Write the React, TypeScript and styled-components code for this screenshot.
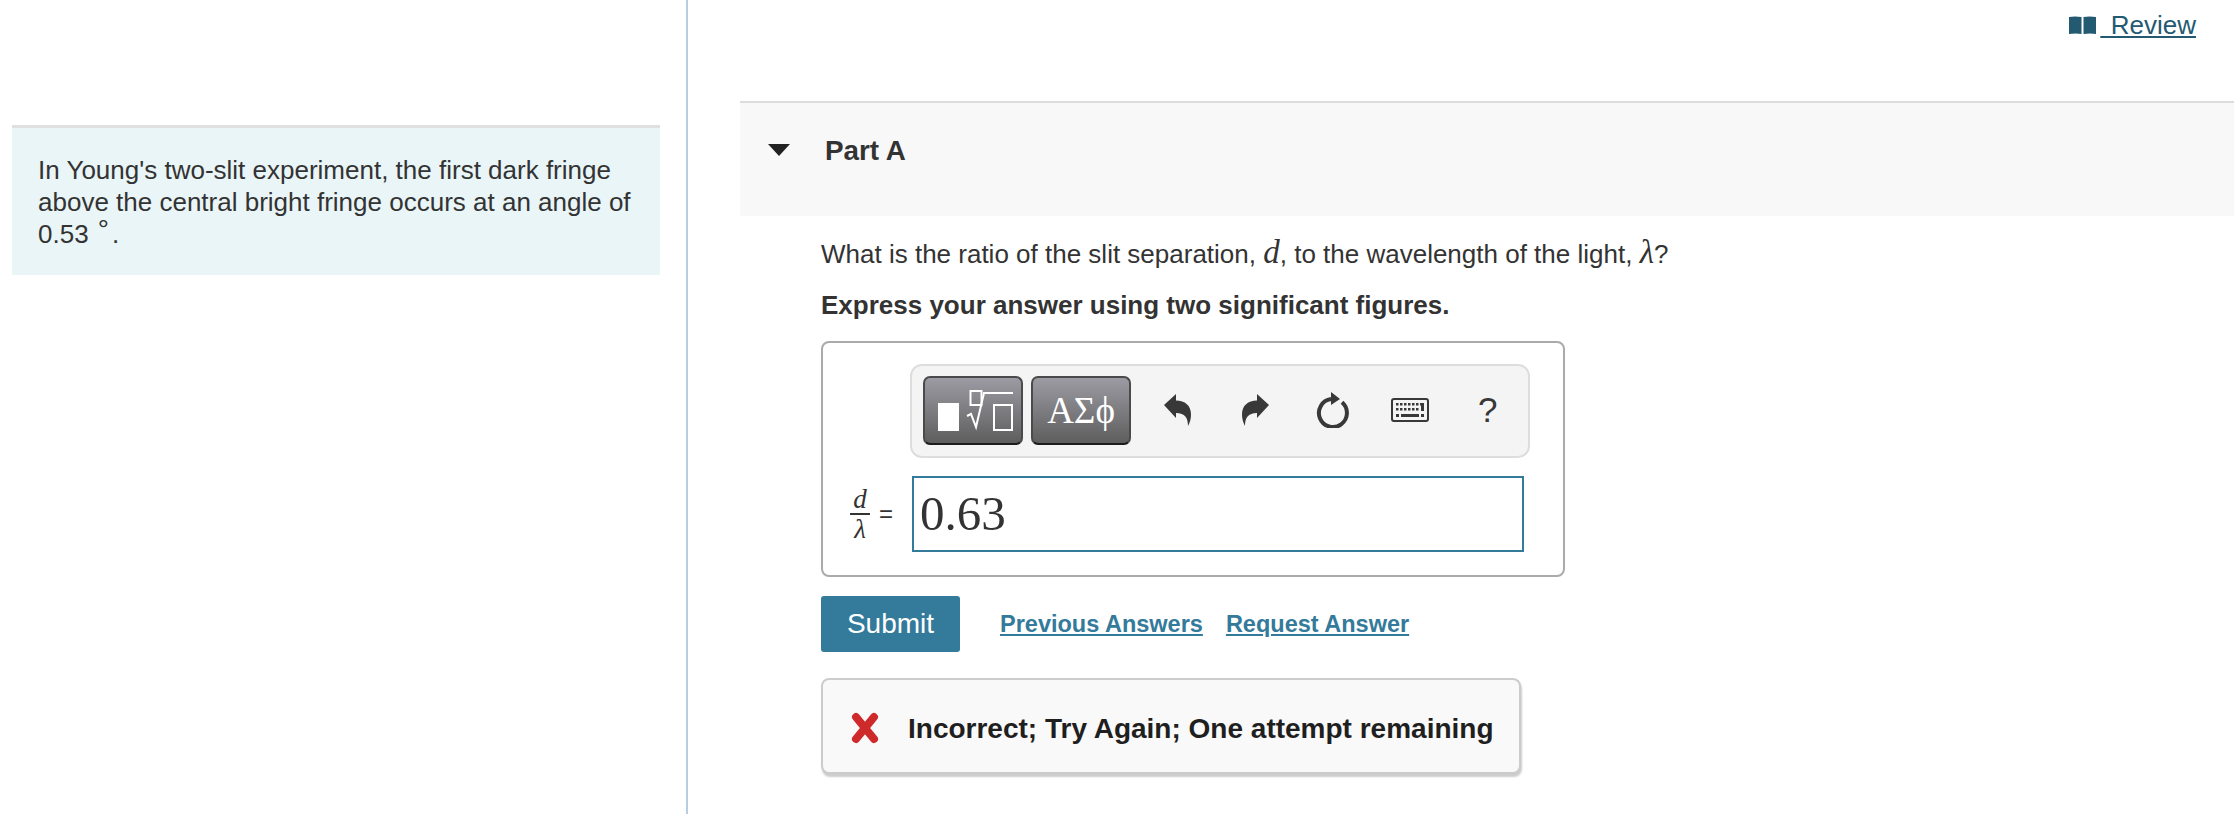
import * as React from "react";
import styled, { createGlobalStyle } from "styled-components";

const GlobalStyle = createGlobalStyle`
  html, body {
    margin: 0;
    background: #ffffff;
    overflow: hidden;
  }
  * {
    box-sizing: border-box;
  }
`;

const Page = styled.div`
  display: flex;
  width: 2240px;
  height: 814px;
  font-family: "Liberation Sans", Arial, sans-serif;
  color: #333333;
`;

const Sidebar = styled.aside`
  width: 688px;
  flex: none;
  padding: 125px 26px 0 12px;
  border-right: 2px solid #b9cde0;
`;

const Intro = styled.div`
  height: 150px;
  padding: 26px 26px 0;
  background: #e9f5f7;
  border-top: 3px solid #e0e0e0;
  font-size: 26px;
  line-height: 32px;
`;

const Degree = styled.span`
  margin: 0 3px 0 2px;
  font-size: 28px;
  line-height: 0;
  vertical-align: 4px;
`;

const Main = styled.main`
  flex: 1;
  padding: 0 6px 0 52px;
`;

const TopRow = styled.div`
  height: 101px;
  display: flex;
  justify-content: flex-end;
  align-items: flex-start;
  padding: 10px 38px 0 0;
`;

const ReviewLink = styled.a`
  display: flex;
  align-items: center;
  color: #235a72;
  font-size: 26px;
  line-height: 30px;
`;

const ReviewText = styled.span`
  margin-left: 4px;
  text-decoration: underline;
  white-space: pre;
  word-spacing: -2px;
`;

const PartHeader = styled.div`
  height: 115px;
  display: flex;
  align-items: flex-start;
  padding: 32px 0 0 28px;
  background: #f8f8f8;
  border-top: 2px solid #dddddd;
`;

const Caret = styled.span`
  width: 0;
  height: 0;
  margin: 9px 35px 0 0;
  border-left: 11px solid transparent;
  border-right: 11px solid transparent;
  border-top: 12px solid #222222;
`;

const PartTitle = styled.h2`
  margin: 0;
  font-size: 27.8px;
  line-height: 32px;
  font-weight: 700;
`;

const Body = styled.div`
  padding: 20px 0 0 81px;
`;

const Question = styled.p`
  margin: 0;
  font-size: 26px;
  line-height: 36px;
`;

const Instruction = styled.p`
  margin: 15px 0 0;
  font-size: 26px;
  line-height: 36px;
  font-weight: 700;
`;

const MathVar = styled.i`
  font-family: "Liberation Serif", serif;
  font-size: 33px;
  line-height: 0;
`;

const AnswerBox = styled.div`
  width: 744px;
  height: 236px;
  margin-top: 18px;
  padding: 21px 39px 0 26px;
  border: 2px solid #aaaaaa;
  border-radius: 8px;
`;

const Toolbar = styled.div`
  display: flex;
  align-items: center;
  width: 620px;
  height: 94px;
  margin-left: 61px;
  padding: 0 0 2px 11px;
  background: #f4f4f4;
  border: 2px solid #dddddd;
  border-radius: 12px;
`;

const TemplateButton = styled.div`
  width: 100px;
  height: 69px;
  margin-right: 8px;
  display: flex;
  align-items: center;
  justify-content: center;
  background: linear-gradient(#9c9ba3, #5e5e5e);
  border: 2px solid #4a4a4a;
  border-bottom-color: #1c1c1c;
  border-radius: 7px;
  color: #ffffff;
  font-family: "Liberation Serif", serif;
  font-size: 37px;
`;

const ToolSlot = styled.div`
  width: 77.5px;
  display: flex;
  align-items: center;
  justify-content: center;
  color: #383838;
  font-size: 35px;
`;

const InputRow = styled.div`
  display: flex;
  align-items: center;
  margin-top: 18px;
`;

const Fraction = styled.div`
  width: 22px;
  display: flex;
  flex-direction: column;
  align-items: center;
  font-family: "Liberation Serif", serif;
  font-style: italic;
  font-size: 27px;
  line-height: 28px;
`;

const FractionTop = styled.span`
  padding: 0 3px;
  border-bottom: 2px solid #333333;
`;

const Equals = styled.span`
  width: 41px;
  padding-left: 8px;
  font-size: 24px;
`;

const AnswerInput = styled.div`
  width: 612px;
  height: 76px;
  padding-left: 6px;
  border: 2px solid #337a9b;
  font-family: "Liberation Serif", serif;
  font-size: 49px;
  line-height: 72px;
`;

const ActionRow = styled.div`
  display: flex;
  align-items: center;
  margin-top: 19px;
`;

const SubmitButton = styled.button`
  width: 139px;
  height: 56px;
  padding: 0;
  border: none;
  border-radius: 3px;
  background: #337a9b;
  color: #ffffff;
  font-family: inherit;
  font-size: 28px;
`;

const ActionLink = styled.a<{ $gap: number }>`
  margin-left: ${p => p.$gap}px;
  color: #337a9b;
  font-size: 23.5px;
  font-weight: 700;
  text-decoration: underline;
`;

const Feedback = styled.div`
  display: flex;
  align-items: center;
  gap: 29px;
  width: 700px;
  height: 96px;
  margin-top: 26px;
  padding: 4px 0 0 28px;
  background: #f9f9f9;
  border: 2px solid #cccccc;
  border-radius: 8px;
  box-shadow: 1px 3px 2px #cccccc;
  color: #1f1f1f;
  font-size: 28px;
  font-weight: 700;
`;

const FeedbackText = styled.span`
  padding-top: 2px;
`;

const BookIcon = () => (
  <svg width="27" height="18" viewBox="0 0 27 18">
    <path d="M0 1q6-1 12.500 0v17q-6-1-12.500 0z" fill="#235a72" />
    <path d="M14.500 1q6-1 12.500 0v17q-6-1-12.500 0z" fill="#235a72" />
  </svg>
);

const UndoIcon = ({ flip }: { flip?: boolean }) => (
  <svg width="27" height="32" viewBox="0 0 27 32" style={flip ? { transform: "scaleX(-1)" } : undefined}>
    <path d="M0 11 12 0v6.500c9 0 15 5 15 14 0 4-1 8-3 11.500 0-8-3-13-12-13v5z" fill="#383838" />
  </svg>
);

const RefreshIcon = () => (
  <svg width="34" height="36" viewBox="0 0 34 36">
    <path d="M26 10.300A14 14 0 1 1 15 7.100" fill="none" stroke="#383838" strokeWidth="4" />
    <path d="M15 0l9 7-9 6z" fill="#383838" />
  </svg>
);

const KeyboardIcon = () => (
  <svg width="38" height="24" viewBox="0 0 38 24">
    <rect x="1" y="1" width="36" height="22" rx="2" fill="#f4f4f4" stroke="#383838" strokeWidth="2" />
    <g fill="#383838">
      {[5, 9, 13, 17, 21, 25, 29].map(x => (
        <rect key={x} x={x} y="5" width="2.500" height="2.500" />
      ))}
      {[5, 9, 13, 17, 21, 25].map(x => (
        <rect key={x} x={x} y="10" width="2.500" height="2.500" />
      ))}
      <rect x="30" y="5" width="3" height="8" />
      <rect x="5" y="16" width="3" height="3" />
      <rect x="10" y="16" width="18" height="3" />
      <rect x="30" y="16" width="3" height="3" />
    </g>
  </svg>
);

const RadicalIcon = () => (
  <svg width="79" height="41" viewBox="-4 0 79 41">
    <rect x="0" y="13" width="21" height="28" fill="#ffffff" />
    <g fill="none" stroke="#ffffff" strokeWidth="2">
      <rect x="32.500" y="1" width="11" height="14" />
      <path d="M29 26l4-2 5 13 8-34h29" />
      <rect x="56" y="15" width="18" height="25" />
    </g>
  </svg>
);

const WrongIcon = () => (
  <svg width="28" height="32" viewBox="0 0 28 32">
    <path d="M5 5l18 22M23 5 5 27" fill="none" stroke="#cf2a2a" strokeWidth="8" strokeLinecap="round" />
  </svg>
);

const App: React.FC = () => {
  return (
    <Page>
      <GlobalStyle />
      <Sidebar>
        <Intro>
          In Young's two-slit experiment, the first dark fringe above the central bright fringe occurs at an angle of
          0.53 <Degree>°</Degree>.
        </Intro>
      </Sidebar>
      <Main>
        <TopRow>
          <ReviewLink>
            <BookIcon />
            <ReviewText>  Review</ReviewText>
          </ReviewLink>
        </TopRow>
        <PartHeader>
          <Caret />
          <PartTitle>Part A</PartTitle>
        </PartHeader>
        <Body>
          <Question>
            What is the ratio of the slit separation, <MathVar>d</MathVar>, to the wavelength of the light,{" "}
            <MathVar>λ</MathVar>?
          </Question>
          <Instruction>Express your answer using two significant figures.</Instruction>
          <AnswerBox>
            <Toolbar>
              <TemplateButton>
                <RadicalIcon />
              </TemplateButton>
              <TemplateButton>ΑΣϕ</TemplateButton>
              <ToolSlot>
                <UndoIcon />
              </ToolSlot>
              <ToolSlot>
                <UndoIcon flip />
              </ToolSlot>
              <ToolSlot>
                <RefreshIcon />
              </ToolSlot>
              <ToolSlot>
                <KeyboardIcon />
              </ToolSlot>
              <ToolSlot>?</ToolSlot>
            </Toolbar>
            <InputRow>
              <Fraction>
                <FractionTop>d</FractionTop>
                <span>λ</span>
              </Fraction>
              <Equals>=</Equals>
              <AnswerInput>0.63</AnswerInput>
            </InputRow>
          </AnswerBox>
          <ActionRow>
            <SubmitButton>Submit</SubmitButton>
            <ActionLink $gap={40}>Previous Answers</ActionLink>
            <ActionLink $gap={23}>Request Answer</ActionLink>
          </ActionRow>
          <Feedback>
            <WrongIcon />
            <FeedbackText>Incorrect; Try Again; One attempt remaining</FeedbackText>
          </Feedback>
        </Body>
      </Main>
    </Page>
  );
};

export default App;
